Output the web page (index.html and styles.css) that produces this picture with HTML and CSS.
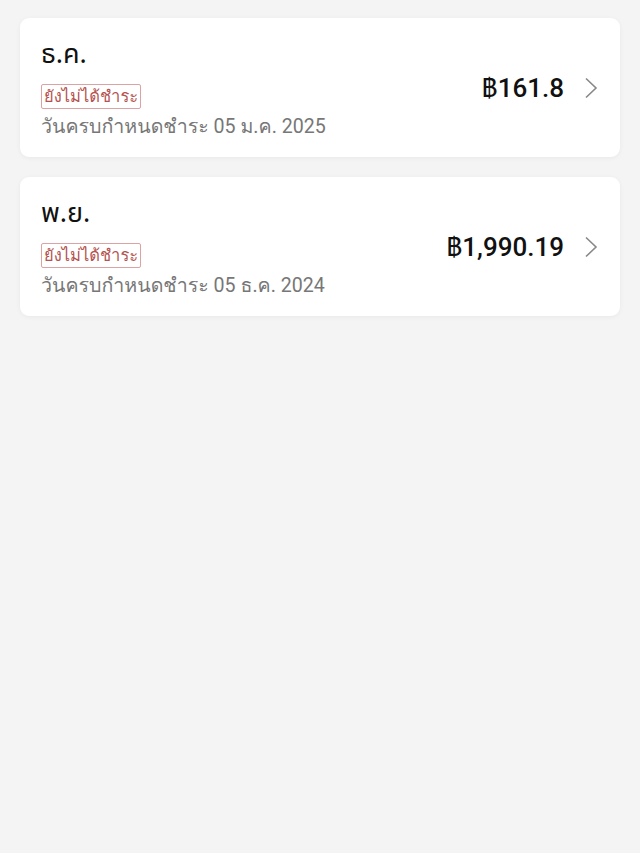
FILE: index.html
```html
<!DOCTYPE html>
<html lang="th">
<head>
<meta charset="utf-8">
<link rel="stylesheet" href="styles.css">
</head>
<body>
<div class="list">
  <div class="card">
    <div class="info">
      <div class="month">ธ.ค.</div>
      <span class="badge">ยังไม่ได้ชำระ</span>
      <div class="due">วันครบกำหนดชำระ 05 ม.ค. 2025</div>
    </div>
    <div class="amount">฿161.8</div>
    <svg class="chev" width="14" height="22" viewBox="0 0 14 22"><path d="M2 1.5 L12 11 L2 20.5" fill="none" stroke="#888" stroke-width="1.6"/></svg>
  </div>
  <div class="card">
    <div class="info">
      <div class="month">พ.ย.</div>
      <span class="badge">ยังไม่ได้ชำระ</span>
      <div class="due">วันครบกำหนดชำระ 05 ธ.ค. 2024</div>
    </div>
    <div class="amount">฿1,990.19</div>
    <svg class="chev" width="14" height="22" viewBox="0 0 14 22"><path d="M2 1.5 L12 11 L2 20.5" fill="none" stroke="#888" stroke-width="1.6"/></svg>
  </div>
</div>
</body>
</html>
```
FILE: styles.css
```css
html, body { margin: 0; padding: 0; }
body {
  background: #f4f4f4;
  font-family: Roboto, Loma, monospace;
  width: 640px; height: 853px;
}
.list { padding: 18px 20px; display: flex; flex-direction: column; gap: 20px; }
.card {
  background: #fff;
  border-radius: 9px;
  height: 139px;
  box-sizing: border-box;
  padding: 0 22px 0 21px;
  display: flex;
  align-items: center;
  box-shadow: 0 1px 5px rgba(0,0,0,0.05);
}
.info { flex: 1; display: flex; flex-direction: column; align-items: flex-start; }
.month { font-family: "Noto Sans", "Noto Sans Thai", sans-serif; font-size: 27px; color: #111; line-height: 32px; margin-top: 3px; }
.badge {
  margin-top: 15px;
  font-size: 16.5px;
  line-height: 23px;
  color: #b5524f;
  border: 1px solid #dba3a3;
  border-radius: 2px;
  padding: 0 2px;
}
.due { font-size: 19.6px; color: #777; line-height: 28px; margin-top: 4px; }
.amount { font-size: 26px; font-weight: 500; color: #111; margin-right: 20px; }
.chev { display: block; }
```
